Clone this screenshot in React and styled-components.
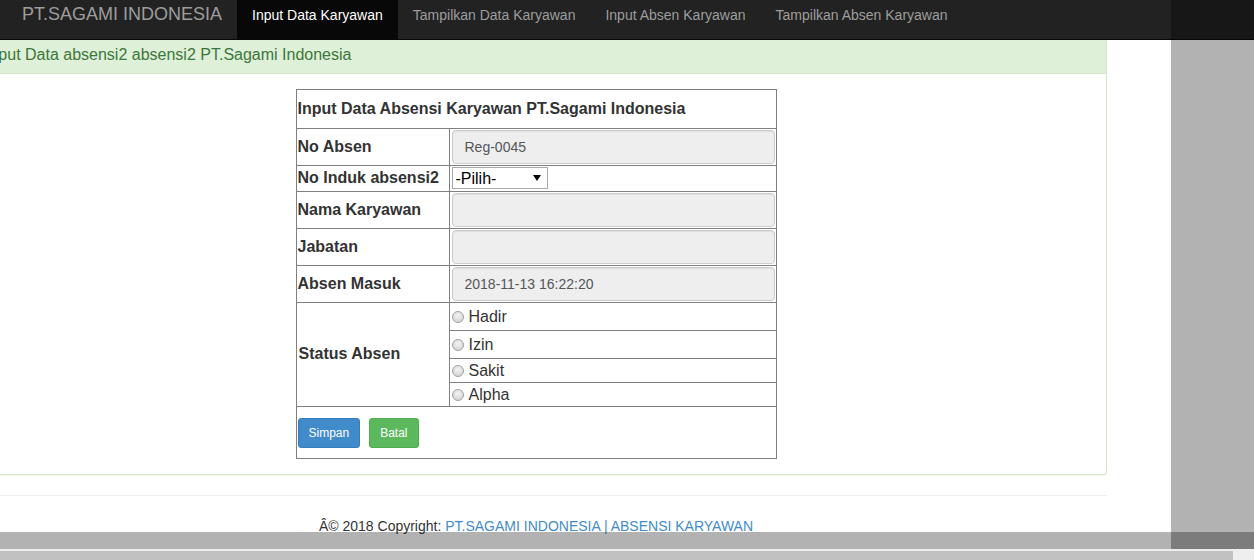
import React from 'react'
import styled, { createGlobalStyle } from 'styled-components'

const GlobalStyle = createGlobalStyle`
  html, body {
    margin: 0;
    padding: 0;
    overflow: hidden;
    background: #fff;
  }
  body {
    font-family: "Liberation Sans", Arial, sans-serif;
    font-size: 14px;
    line-height: 1.42857;
    color: #333;
  }
  * {
    box-sizing: border-box;
  }
`

const Navbar = styled.nav`
  display: flex;
  align-items: flex-start;
  height: 40px;
  padding-left: 7px;
  background: #222;
  border-bottom: 1px solid #080808;
`

const Brand = styled.a`
  padding: 4px 15px 0 15px;
  font-size: 18px;
  line-height: 20px;
  color: #9d9d9d;
  text-decoration: none;
`

const NavList = styled.ul`
  display: flex;
  margin: 0;
  padding: 0;
  list-style: none;
`

const NavLink = styled.a`
  display: block;
  height: 39px;
  padding: 5px 15px 0;
  font-size: 14px;
  line-height: 20px;
  text-decoration: none;
  color: ${(p) => (p.$active ? '#fff' : '#9d9d9d')};
  background: ${(p) => (p.$active ? '#080808' : 'transparent')};
`

const Main = styled.main`
  width: 1142px;
  margin-left: -35px;
`

const Panel = styled.section`
  margin-bottom: 20px;
  border: 1px solid #d6e9c6;
  border-top: none;
  border-radius: 0 0 4px 4px;
  box-shadow: 0 1px 1px rgba(0, 0, 0, 0.05);
`

const PanelHeading = styled.div`
  height: 34px;
  padding: 6px 15px 0 19px;
  font-size: 16px;
  line-height: 18px;
  color: #3c763d;
  background: #dff0d8;
  border-bottom: 1px solid #d6e9c6;
`

const PanelBody = styled.div`
  padding: 15px;
`

const FormTable = styled.table`
  width: 481px;
  margin: 0 auto;
  border-collapse: collapse;
  border: 1px solid #808080;
`

const Cell = styled.td`
  height: ${(p) => p.$h}px;
  padding: 1px 1px 1px 2px;
  border: 1px solid #808080;
  vertical-align: middle;
  box-sizing: content-box;
`

const Label = styled(Cell)`
  width: 149px;
  padding-left: 1px;
  font-size: 16px;
  font-weight: bold;
  color: #333;
  white-space: nowrap;
`

const Title = styled(Label)`
  width: auto;
`

const TextInput = styled.input`
  display: block;
  width: 100%;
  height: 34px;
  padding: 6px 12px;
  font-family: inherit;
  font-size: 14px;
  color: #555;
  background: #eee;
  border: 1px solid #ccc;
  border-radius: 4px;
  box-shadow: inset 0 1px 1px rgba(0, 0, 0, 0.075);
  outline: none;
`

const SelectWrap = styled.span`
  position: relative;
  display: inline-block;
  vertical-align: middle;
`

const Select = styled.select`
  width: 96px;
  height: 22px;
  padding: 0 0 0 3px;
  font-family: inherit;
  font-size: 16px;
  color: #000;
  background: #fff;
  border: 1px solid #a9a9a9;
  border-radius: 0;
  appearance: none;
  outline: none;
`

const Caret = styled.svg`
  position: absolute;
  top: 8px;
  right: 7px;
  pointer-events: none;
`

const RadioLabel = styled.label`
  display: flex;
  align-items: center;
  font-size: 16px;
  line-height: 20px;
  color: #333;
`

const Radio = styled.input`
  width: 12px;
  height: 12px;
  margin: 0 5px 0 0;
  border: 1px solid #a2a2a2;
  border-radius: 50%;
  background: radial-gradient(circle at 50% 35%, #f4f4f4 0%, #dcdcdc 60%, #cfcfcf 100%);
  appearance: none;
`

const Button = styled.button`
  height: 30px;
  padding: 5px 10px;
  font-family: inherit;
  font-size: 12px;
  line-height: 1.5;
  color: #fff;
  border: 1px solid ${(p) => (p.$variant === 'success' ? '#4cae4c' : '#357ebd')};
  background: ${(p) => (p.$variant === 'success' ? '#5cb85c' : '#428bca')};
  border-radius: 3px;
`

const Actions = styled.div`
  display: flex;
  gap: 9px;
`

const Rule = styled.hr`
  margin: 0 0 20px;
  border: 0;
  border-top: 1px solid #eee;
`

const Footer = styled.footer`
  text-align: center;
  font-size: 14px;
  line-height: 20px;
  color: #333;
  a {
    color: #428bca;
    text-decoration: none;
  }
`

const Shade = styled.div`
  position: fixed;
  background: rgba(0, 0, 0, 0.3);
  pointer-events: none;
`

const SideShade = styled(Shade)`
  top: 0;
  left: 1171px;
  right: 0;
  height: 549px;
`

const BottomShade = styled(Shade)`
  top: 532px;
  left: 0;
  right: 0;
  height: 17px;
`

const ScrollTrack = styled.div`
  position: fixed;
  top: 549px;
  left: 0;
  right: 0;
  bottom: 0;
  padding-top: 2px;
  background: #eeeeee;
`

const ScrollThumb = styled.div`
  width: 1233px;
  height: 100%;
  background: #c1c1c1;
`

const navItems = [
  'Input Data Karyawan',
  'Tampilkan Data Karyawan',
  'Input Absen Karyawan',
  'Tampilkan Absen Karyawan',
]

const statuses = [
  { name: 'Hadir', h: 25 },
  { name: 'Izin', h: 25 },
  { name: 'Sakit', h: 21 },
  { name: 'Alpha', h: 21 },
]

const App = () => {
  return (
    <>
      <GlobalStyle />
      <Navbar>
        <Brand href="#">PT.SAGAMI INDONESIA</Brand>
        <NavList>
          {navItems.map((item, i) => (
            <li key={item}>
              <NavLink href="#" $active={i === 0}>
                {item}
              </NavLink>
            </li>
          ))}
        </NavList>
      </Navbar>

      <Main>
        <Panel>
          <PanelHeading>Input Data absensi2 absensi2 PT.Sagami Indonesia</PanelHeading>
          <PanelBody>
            <form onSubmit={(e) => e.preventDefault()}>
              <FormTable>
                <tbody>
                  <tr>
                    <Title as="td" colSpan={2} $h={36}>
                      Input Data Absensi Karyawan PT.Sagami Indonesia
                    </Title>
                  </tr>
                  <tr>
                    <Label $h={34}>No Absen</Label>
                    <Cell $h={34}>
                      <TextInput readOnly value="Reg-0045" />
                    </Cell>
                  </tr>
                  <tr>
                    <Label $h={23}>No Induk absensi2</Label>
                    <Cell $h={23}>
                      <SelectWrap>
                        <Select defaultValue="">
                          <option value="">-Pilih-</option>
                        </Select>
                        <Caret width="8" height="6" viewBox="0 0 8 6">
                          <path d="M0 0H8L4 6Z" fill="#000" />
                        </Caret>
                      </SelectWrap>
                    </Cell>
                  </tr>
                  <tr>
                    <Label $h={34}>Nama Karyawan</Label>
                    <Cell $h={34}>
                      <TextInput readOnly value="" />
                    </Cell>
                  </tr>
                  <tr>
                    <Label $h={34}>Jabatan</Label>
                    <Cell $h={34}>
                      <TextInput readOnly value="" />
                    </Cell>
                  </tr>
                  <tr>
                    <Label $h={34}>Absen Masuk</Label>
                    <Cell $h={34}>
                      <TextInput readOnly value="2018-11-13 16:22:20" />
                    </Cell>
                  </tr>
                  {statuses.map((s, i) => (
                    <tr key={s.name}>
                      {i === 0 && (
                        <Label rowSpan={4} $h={0} style={{ paddingLeft: 2 }}>
                          Status Absen
                        </Label>
                      )}
                      <Cell $h={s.h}>
                        <RadioLabel>
                          <Radio type="radio" name="status" value={s.name} />
                          {s.name}
                        </RadioLabel>
                      </Cell>
                    </tr>
                  ))}
                  <tr>
                    <Cell colSpan={2} $h={49} style={{ paddingLeft: 1 }}>
                      <Actions>
                        <Button type="submit">Simpan</Button>
                        <Button type="reset" $variant="success">Batal</Button>
                      </Actions>
                    </Cell>
                  </tr>
                </tbody>
              </FormTable>
            </form>
          </PanelBody>
        </Panel>
        <Rule />
        <Footer>
          Â© 2018 Copyright: <a href="#">PT.SAGAMI INDONESIA | ABSENSI KARYAWAN</a>
        </Footer>
      </Main>

      <SideShade />
      <BottomShade />
      <ScrollTrack>
        <ScrollThumb />
      </ScrollTrack>
    </>
  )
}

export default App
